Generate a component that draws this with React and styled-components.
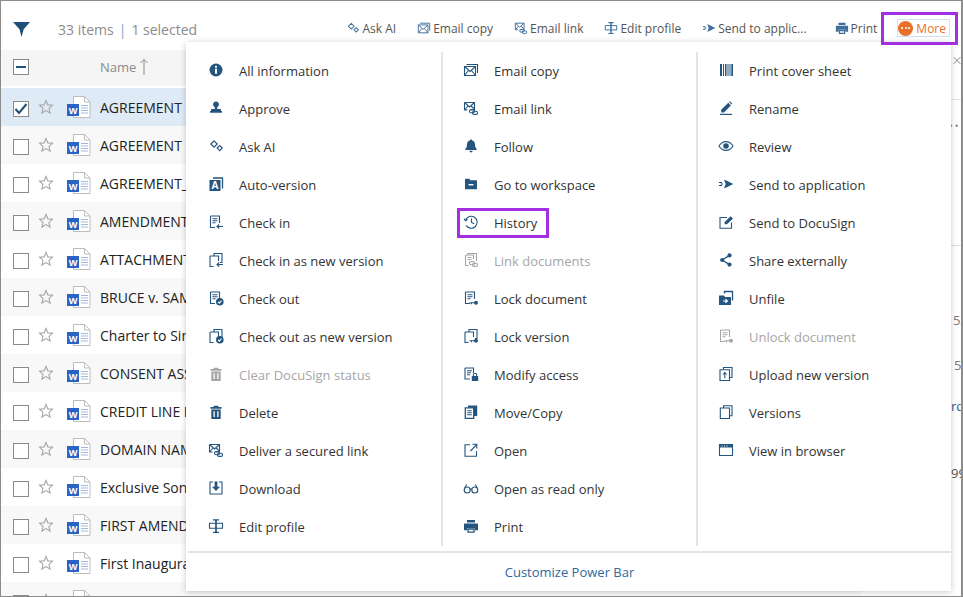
import * as React from 'react';
import styled, { createGlobalStyle } from 'styled-components';

const GlobalStyle = createGlobalStyle`
    html, body {
        margin: 0;
        background: #fff;
        overflow: hidden;
    }
    * {
        box-sizing: border-box;
    }
`;

const Frame = styled.div`
    position: relative;
    width: 963px;
    height: 597px;
    border: 1px solid #8c8c8c;
    border-right-width: 2px;
    overflow: hidden;
    display: flex;
    flex-direction: column;
    font-family: 'Open Sans', 'Liberation Sans', sans-serif;
    background: #fff;
`;

const Toolbar = styled.div`
    flex: none;
    height: 49px;
    display: flex;
    align-items: center;
    padding: 8px 11px 0 12px;
`;

const Count = styled.div`
    margin-left: 28px;
    font-size: 14px;
    color: #8b8b8b;
    span {
        color: #7fa6c9;
        margin: 0 5px;
    }
`;

const Actions = styled.div`
    margin-left: auto;
    display: flex;
    align-items: center;
    gap: 21px;
    margin-top: -3px;
`;

const Action = styled.div`
    display: flex;
    align-items: center;
    gap: 2px;
    font-size: 12px;
    color: #555;
    white-space: nowrap;
    margin-right: ${props => props.$extra || 0}px;
    svg {
        color: #3f6f9c;
    }
`;

const MoreButton = styled.div`
    position: relative;
    display: flex;
    align-items: center;
    gap: 3px;
    height: 18px;
    margin-left: -1px;
    padding: 0 3px 0 0;
    font-size: 12px;
    color: #e8702a;
    border: 1px solid #d3e1ef;
    &::after {
        content: '';
        position: absolute;
        z-index: 2;
        top: -8px;
        left: -17px;
        right: -9px;
        bottom: -9px;
        border: 3px solid #a32fe0;
    }
`;

const Dots = styled.span`
    width: 15px;
    height: 15px;
    border-radius: 50%;
    background: #e8702a;
    display: flex;
    align-items: center;
    justify-content: center;
    gap: 1.5px;
    i {
        width: 2px;
        height: 2px;
        background: #fff;
        border-radius: 50%;
    }
`;

const Content = styled.div`
    flex: 1;
    min-height: 0;
    display: flex;
`;

const List = styled.div`
    flex: 1;
    min-width: 0;
`;

const HeaderRow = styled.div`
    height: 38px;
    padding: 0 12px 2px;
    display: flex;
    align-items: center;
    background: #f5f5f5;
    border-bottom: 2px solid #fff;
    color: #8a8a8a;
    font-size: 13px;
`;

const HeaderName = styled.span`
    margin-left: 71px;
    margin-right: 3px;
`;

const Row = styled.div`
    height: 38px;
    padding: 0 12px;
    display: flex;
    align-items: center;
    background: ${props => (props.$selected ? '#deeaf6' : props.$odd ? '#f8f8f8' : '#fff')};
`;

const Checkbox = styled.span`
    flex: none;
    width: 16px;
    height: 16px;
    border: 1px solid #8a8a8a;
    background: #fff;
    display: flex;
    align-items: center;
    justify-content: center;
`;

const RowCheckbox = styled(Checkbox)`
    margin-top: 4px;
`;

const RowStar = styled.svg`
    flex: none;
    width: 16px;
    height: 16px;
    margin-left: 9px;
    fill: none;
    stroke: #a6a6a6;
    stroke-width: 1.1;
`;

const FileIcon = styled.svg`
    flex: none;
    width: 24px;
    height: 24px;
    margin-left: 13px;
`;

const RowName = styled.span`
    margin-left: 9px;
    font-size: 14px;
    color: #222;
    white-space: nowrap;
`;

const DetailPanel = styled.div`
    flex: none;
    width: 100px;
    overflow: hidden;
    font-size: 13px;
    line-height: 18px;
    white-space: nowrap;
`;

const DetailClose = styled.div`
    height: 50px;
    display: flex;
    padding: 5px 0 0 92px;
    border-bottom: 1px solid #e6e6e6;
`;

const DetailDots = styled.div`
    height: 146px;
    padding: 17px 0 0 88px;
    border-bottom: 1px solid #dedede;
    color: #808080;
    font-size: 10px;
    letter-spacing: 2px;
`;

const DetailValue = styled.div`
    height: ${props => props.$height}px;
    padding-left: ${props => props.$left}px;
    color: ${props => props.$color};
`;

const Menu = styled.div`
    position: absolute;
    left: 185px;
    top: 41px;
    width: 765px;
    height: 549px;
    padding-top: 10px;
    background: #fff;
    box-shadow: 0 1px 6px rgba(0, 0, 0, 0.22);
    display: flex;
    flex-direction: column;
`;

const Columns = styled.div`
    display: grid;
    grid-template-columns: repeat(3, 255px);
`;

const Column = styled.div`
    position: relative;
    height: 494px;
    & + &::before {
        content: '';
        position: absolute;
        left: 0;
        top: 0;
        bottom: 0;
        width: 2px;
        background: #e4e4e4;
    }
`;

const Item = styled.div`
    position: relative;
    height: 38px;
    padding-left: 22px;
    display: flex;
    align-items: center;
    gap: 15px;
    font-size: 13px;
    color: ${props => (props.$disabled ? '#a6a6a6' : '#333')};
    svg {
        color: ${props => (props.$disabled ? '#a6a6a6' : '#24557f')};
        margin-top: -2px;
    }
    ${props =>
        props.$marked &&
        `&::after {
            content: '';
            position: absolute;
            box-sizing: border-box;
            left: 16px;
            top: 4px;
            width: 92px;
            height: 30px;
            border: 3px solid #a32fe0;
        }`}
`;

const MenuFooter = styled.div`
    margin-top: 5px;
    margin-left: 2px;
    flex: 1;
    border-top: 2px solid #e4e4e4;
    display: flex;
    align-items: center;
    justify-content: center;
    font-size: 13px;
    color: #2f6a9c;
`;

const FunnelIcon = styled.svg`
    flex: none;
    width: 17px;
    height: 15px;
    fill: #1f4e79;
`;

const Glyph = ({ size = 16, children }) => (
    <svg
        width={size}
        height={size}
        viewBox="0 0 16 16"
        fill="none"
        stroke="currentColor"
        strokeWidth="1.1"
        style={{ flex: 'none' }}
    >
        {children}
    </svg>
);

const Solid = props => <path fill="currentColor" stroke="none" {...props} />;

const Envelope = () => (
    <>
        <path d="M1.5 4.5h11v9h-11zM1.5 4.5 7 9.5l5.5-5M1.5 13.5l4-5M12.5 13.5l-4-5" />
        <path d="M3.5 2.5h11V11" />
    </>
);

const LinkEnvelope = () => (
    <>
        <path d="M1.5 2.5h10v7.5h-4M1.5 2.5v7.5h3M1.5 2.5l5 4.5 5-4.5M1.5 10l3.5-4M11.5 9 8 6" />
        <rect x="6.5" y="9.5" width="5" height="3.2" rx="1.5" />
        <rect x="9.5" y="11.2" width="5" height="3.2" rx="1.5" />
    </>
);

const DocLines = () => (
    <>
        <path d="M2.5 2h9v7M2.5 2v11.5H7" />
        <path d="M4.5 4.7h5M4.5 6.7h5M4.5 8.7h3" />
    </>
);

const Stack = () => (
    <>
        <path d="M6 4V1.5h8v9h-2" />
        <path d="M2 4h8.5v5M2 4v10.5h3.5" />
    </>
);

const ArrowLeft = () => <path d="M15 12.5H9M11.2 10.5 9 12.5l2.2 2" />;

const CircleCheck = () => (
    <>
        <circle cx="11.8" cy="11.8" r="3.8" fill="currentColor" stroke="none" />
        <path d="M10 11.8l1.3 1.3 2.2-2.4" stroke="#fff" />
    </>
);

const KeyMark = () => (
    <>
        <circle cx="13" cy="12.7" r="2" fill="currentColor" stroke="none" />
        <path d="M6.5 12.7H12M8.5 12.7v1.6" />
    </>
);

const icons = {
    info: (
        <>
            <circle cx="8" cy="8" r="6.5" fill="currentColor" stroke="none" />
            <circle cx="8" cy="4.8" r="1.1" fill="#fff" stroke="none" />
            <path d="M7 6.8h2v5H7z" fill="#fff" stroke="none" />
        </>
    ),
    approve: (
        <>
            <circle cx="8" cy="4.4" r="2.8" fill="currentColor" stroke="none" />
            <Solid d="M6.8 6h2.4v4H6.8zM3 9.6c0-.4.3-.6.6-.6h8.8c.3 0 .6.2.6.6V11H14v1.8H2V11h1z" />
        </>
    ),
    askAI: (
        <>
            <path d="M6 2.8 9.2 6 6 9.2 2.8 6z" strokeWidth="1.2" />
            <path d="M11.7 7.6l2.5 2.5-2.5 2.5-2.5-2.5z" strokeWidth="1.2" />
        </>
    ),
    autoVersion: (
        <>
            <path d="M5 2h9.5v10.5" strokeWidth="1.3" />
            <Solid d="M1.5 4h11v11h-11z" />
            <text x="7" y="13" textAnchor="middle" fontSize="10" fontWeight="700" fontFamily="Open Sans" fill="#fff" stroke="none">
                A
            </text>
        </>
    ),
    checkIn: (
        <>
            <DocLines />
            <ArrowLeft />
        </>
    ),
    checkInNew: (
        <>
            <Stack />
            <ArrowLeft />
        </>
    ),
    checkOut: (
        <>
            <DocLines />
            <CircleCheck />
        </>
    ),
    checkOutNew: (
        <>
            <Stack />
            <CircleCheck />
        </>
    ),
    trash: (
        <>
            <Solid d="M5.7 3V1.7h4.6V3H13.5v1.8h-11V3zM3.3 5.6h9.4V15H3.3z" />
            <path d="M6.1 7.3v5.8M9.9 7.3v5.8" stroke="#fff" strokeWidth="1.3" />
        </>
    ),
    emailLink: <LinkEnvelope />,
    download: (
        <>
            <path d="M5 2H2v12h12V2h-3" />
            <Solid d="M6.6 1.5h2.8v5.2H12L8 11 4 6.7h2.6z" />
        </>
    ),
    editProfile: (
        <>
            <path d="M1.5 5.2h13v5h-13z" />
            <path d="M8 2v12" strokeWidth="1.7" />
            <path d="M5 1.8h6M5 14.3h6" strokeWidth="1.3" />
        </>
    ),
    emailCopy: <Envelope />,
    bell: (
        <Solid d="M8 1.5c-.7 0-1.1.4-1.1 1C4.8 3 4 4.6 4 6.5c0 2.7-1 3.6-1.7 4.5v1h11.4v-1c-.7-.9-1.7-1.8-1.7-4.5 0-1.9-.8-3.5-2.9-4 0-.6-.4-1-1.1-1zM6.4 12.8a1.6 1.6 0 0 0 3.2 0z" />
    ),
    folder: (
        <>
            <Solid d="M2 3.6c0-.5.3-.8.8-.8h3.5l1 1.4h6c.4 0 .7.3.7.8v8.2H2z" />
            <path d="M5.5 8.7h5" stroke="#fff" strokeWidth="1.4" />
        </>
    ),
    history: (
        <>
            <path d="M2.6 6A6 6 0 1 1 3.1 11.4" />
            <path d="M1 4.6 2.6 6.8 4.6 5.2" />
            <path d="M8.5 4.5v4l2.7 1.3" />
        </>
    ),
    linkDocs: (
        <>
            <path d="M5 3V1.5h8.5v7.5M2.5 3h8v4M2.5 3v10.5h3" />
            <path d="M4.5 5.5h4M4.5 7.5h4" />
            <rect x="6.5" y="9.5" width="5" height="3.2" rx="1.5" />
            <rect x="9.5" y="11.2" width="5" height="3.2" rx="1.5" />
        </>
    ),
    lockDoc: (
        <>
            <DocLines />
            <KeyMark />
        </>
    ),
    lockVersion: (
        <>
            <Stack />
            <KeyMark />
        </>
    ),
    modifyAccess: (
        <>
            <path d="M2 2h8.5v5M2 2v11h5" />
            <path d="M4 4.7h5M4 6.7h4M4 8.7h3" />
            <rect x="8.8" y="10" width="6.4" height="5" rx=".6" fill="currentColor" stroke="none" />
            <path d="M10.4 10V8.8a1.6 1.6 0 0 1 3.2 0V10" />
        </>
    ),
    moveCopy: (
        <>
            <Solid d="M5 1.5h9.2v10.5H5z" />
            <path d="M2.3 3.8h8.4v10.6H2.3z" fill="#fff" strokeWidth="1.3" />
            <path d="M4.2 6.8h4.6M4.2 8.8h4.6M4.2 10.8h4.6" />
        </>
    ),
    open: (
        <>
            <path d="M7 2.7H2v11.5h11.5V9" />
            <path d="M9.5 2.3h4.3v4.3M13.8 2.3 7.5 9" />
        </>
    ),
    glasses: (
        <>
            <circle cx="4.2" cy="10" r="3" />
            <circle cx="11.8" cy="10" r="3" />
            <path d="M7 9.3c.6-.5 1.4-.5 2 0M1.6 8.5l2-4M14.4 8.5l-2-4" />
        </>
    ),
    print: (
        <>
            <Solid d="M4 2h8v2.6H4zM1.5 5.5h13c.3 0 .5.2.5.5v6.3h-3.2V10H4.2v2.3H1V6c0-.3.2-.5.5-.5z" />
            <path d="M5 11h6v3.2H5z" strokeWidth="1.3" />
        </>
    ),
    barcode: (
        <Solid d="M2 2h2v12H2zM5 2h1v12H5zM7 2h1.5v12H7zM9.5 2h1v12h-1zM11.5 2h1v12h-1zM13.3 2H15v12h-1.7z" />
    ),
    rename: (
        <>
            <Solid d="M3.2 9.8 10.3 2.8l2.6 2.6-7 7.1H3.2zM11.1 2l.9-.7 2.3 2.4-.7.9z" />
            <path d="M2 14.4h12" strokeWidth="1.2" />
        </>
    ),
    review: (
        <>
            <path d="M1 8s2.6-4.4 7-4.4S15 8 15 8s-2.6 4.4-7 4.4S1 8 1 8z" />
            <circle cx="8" cy="8" r="2.8" fill="currentColor" stroke="none" />
        </>
    ),
    send: (
        <>
            <Solid d="M6 3.5 15.3 8 6 12.5 7.7 8z" />
            <path d="M1 6.5h3M1 9.5h3M2.5 8h2.5" />
        </>
    ),
    docusign: (
        <>
            <path d="M13.5 8.5v5.7H2V3.5h7" />
            <Solid d="M6.6 10.3V8l6-5.7L15 4.5l-6.1 5.8z" />
        </>
    ),
    share: (
        <>
            <circle cx="11.5" cy="3.4" r="2.1" fill="currentColor" stroke="none" />
            <circle cx="4.2" cy="8" r="2.1" fill="currentColor" stroke="none" />
            <circle cx="11.5" cy="12.6" r="2.1" fill="currentColor" stroke="none" />
            <path d="M11.5 3.4 4.2 8l7.3 4.6" strokeWidth="1.3" />
        </>
    ),
    unfile: (
        <>
            <path d="M6.5 3.5v-2h8v9" strokeWidth="1.3" />
            <Solid d="M1 5.5h5l1 1.4h6V15H1z" />
            <path d="M5 11h4M7.4 9.2 9.4 11l-2 1.8" stroke="#fff" strokeWidth="1.2" />
        </>
    ),
    unlock: (
        <>
            <DocLines />
            <KeyMark />
        </>
    ),
    upload: (
        <>
            <path d="M5.5 3.5v-2h8.5v10h-2.5" />
            <path d="M2 3.7h9.5v10.8H2z" />
            <path d="M6.8 12.2V6.8M5 8.5l1.8-2 1.8 2" />
        </>
    ),
    versions: (
        <>
            <path d="M5.5 4V1.7H14v10h-2.5" />
            <path d="M2.3 4h9.2v10.5H2.3z" />
        </>
    ),
    browser: (
        <>
            <path d="M1.5 2.5h13v11h-13z" />
            <Solid d="M1.5 2.5h13v3h-13z" />
            <path d="M3.5 4h1M6 4h1M8.5 4h1" stroke="#fff" />
        </>
    ),
};

const columns = [
    [
        ['info', 'All information'],
        ['approve', 'Approve'],
        ['askAI', 'Ask AI'],
        ['autoVersion', 'Auto-version'],
        ['checkIn', 'Check in'],
        ['checkInNew', 'Check in as new version'],
        ['checkOut', 'Check out'],
        ['checkOutNew', 'Check out as new version'],
        ['trash', 'Clear DocuSign status', true],
        ['trash', 'Delete'],
        ['emailLink', 'Deliver a secured link'],
        ['download', 'Download'],
        ['editProfile', 'Edit profile'],
    ],
    [
        ['emailCopy', 'Email copy'],
        ['emailLink', 'Email link'],
        ['bell', 'Follow'],
        ['folder', 'Go to workspace'],
        ['history', 'History'],
        ['linkDocs', 'Link documents', true],
        ['lockDoc', 'Lock document'],
        ['lockVersion', 'Lock version'],
        ['modifyAccess', 'Modify access'],
        ['moveCopy', 'Move/Copy'],
        ['open', 'Open'],
        ['glasses', 'Open as read only'],
        ['print', 'Print'],
    ],
    [
        ['barcode', 'Print cover sheet'],
        ['rename', 'Rename'],
        ['review', 'Review'],
        ['send', 'Send to application'],
        ['docusign', 'Send to DocuSign'],
        ['share', 'Share externally'],
        ['unfile', 'Unfile'],
        ['unlock', 'Unlock document', true],
        ['upload', 'Upload new version'],
        ['versions', 'Versions'],
        ['browser', 'View in browser'],
    ],
];

const actions = [
    ['askAI', 'Ask AI'],
    ['emailCopy', 'Email copy'],
    ['emailLink', 'Email link'],
    ['editProfile', 'Edit profile'],
    ['send', 'Send to applic...', 7],
    ['print', 'Print'],
];

const files = [
    'AGREEMENT',
    'AGREEMENT',
    'AGREEMENT_',
    'AMENDMENT',
    'ATTACHMENT',
    'BRUCE v. SAM',
    'Charter to Sim',
    'CONSENT ASS',
    'CREDIT LINE I',
    'DOMAIN NAM',
    'Exclusive Son',
    'FIRST AMEND',
    'First Inaugura',
    '',
];

const WordIcon = () => (
    <FileIcon viewBox="0 0 24 24">
        <path d="M6.5 1.5h11L23 7v15.5H6.5z" fill="#fff" stroke="#bdbdbd" />
        <path d="M17.5 1.5V7H23" fill="none" stroke="#bdbdbd" />
        <path d="M14 10.5h7M14 13h7M14 15.5h7M14 18h7" stroke="#9dbbe0" />
        <rect x="0" y="9" width="12" height="12" fill="#2b62c4" />
        <text x="6" y="18.5" textAnchor="middle" fontSize="9" fontWeight="700" fontFamily="Open Sans" fill="#fff">
            W
        </text>
    </FileIcon>
);

const App = () => {
    return (
        <Frame>
            <GlobalStyle />
            <Toolbar>
                <FunnelIcon viewBox="0 0 17 15">
                    <path d="M0 0h17l-6.3 7.2L8.5 15l-2-7.8z" />
                </FunnelIcon>
                <Count>
                    33 items<span>|</span>1 selected
                </Count>
                <Actions>
                    {actions.map(([icon, label, extra]) => (
                        <Action key={label} $extra={extra}>
                            <Glyph size={14}>{icons[icon]}</Glyph>
                            {label}
                        </Action>
                    ))}
                    <MoreButton>
                        <Dots>
                            <i />
                            <i />
                            <i />
                        </Dots>
                        More
                    </MoreButton>
                </Actions>
            </Toolbar>
            <Content>
                <List>
                    <HeaderRow>
                        <Checkbox>
                            <svg width="10" height="10" viewBox="0 0 10 10">
                                <path d="M0 5h10" stroke="#24557f" strokeWidth="2" />
                            </svg>
                        </Checkbox>
                        <HeaderName>Name</HeaderName>
                        <svg width="10" height="18" viewBox="0 0 10 18" fill="none" stroke="#8a8a8a">
                            <path d="M5 17V1.5M1.5 5 5 1.5 8.5 5" />
                        </svg>
                    </HeaderRow>
                    {files.map((name, index) => (
                        <Row key={index} $selected={index === 0} $odd={index % 2 === 1}>
                            <RowCheckbox>
                                {index === 0 && (
                                    <svg width="14" height="12" viewBox="0 0 14 12" fill="none" stroke="#1f4e79" strokeWidth="2">
                                        <path d="M1.5 6 5 10l7.5-9" />
                                    </svg>
                                )}
                            </RowCheckbox>
                            <RowStar viewBox="0 0 16 16">
                                <path d="M8 1.5l1.9 4.4 4.6.4-3.5 3.1 1.1 4.6L8 11.6 3.9 14l1.1-4.6-3.5-3.1 4.6-.4z" />
                            </RowStar>
                            <WordIcon />
                            <RowName>{name}</RowName>
                        </Row>
                    ))}
                </List>
                <DetailPanel>
                    <DetailClose>
                        <svg width="11" height="11" viewBox="0 0 11 11" stroke="#808080" strokeWidth="1.3">
                            <path d="M1 1l9 9M10 1 1 10" />
                        </svg>
                    </DetailClose>
                    <DetailDots>•••</DetailDots>
                    <DetailValue $height={65} />
                    <DetailValue $height={45} $left={92} $color="#7a7a7a">
                        5/15
                    </DetailValue>
                    <DetailValue $height={41} $left={93} $color="#7a7a7a">
                        5/15
                    </DetailValue>
                    <DetailValue $height={67} $left={90} $color="#1f5c99">
                        rd
                    </DetailValue>
                    <DetailValue $height={20} $left={90} $color="#555">
                        99
                    </DetailValue>
                </DetailPanel>
            </Content>
            <Menu>
                <Columns>
                    {columns.map((items, index) => (
                        <Column key={index}>
                            {items.map(([icon, label, disabled]) => (
                                <Item key={label} $disabled={disabled} $marked={label === 'History'}>
                                    <Glyph>{icons[icon]}</Glyph>
                                    {label}
                                </Item>
                            ))}
                        </Column>
                    ))}
                </Columns>
                <MenuFooter>Customize Power Bar</MenuFooter>
            </Menu>
        </Frame>
    );
};

export default App;
